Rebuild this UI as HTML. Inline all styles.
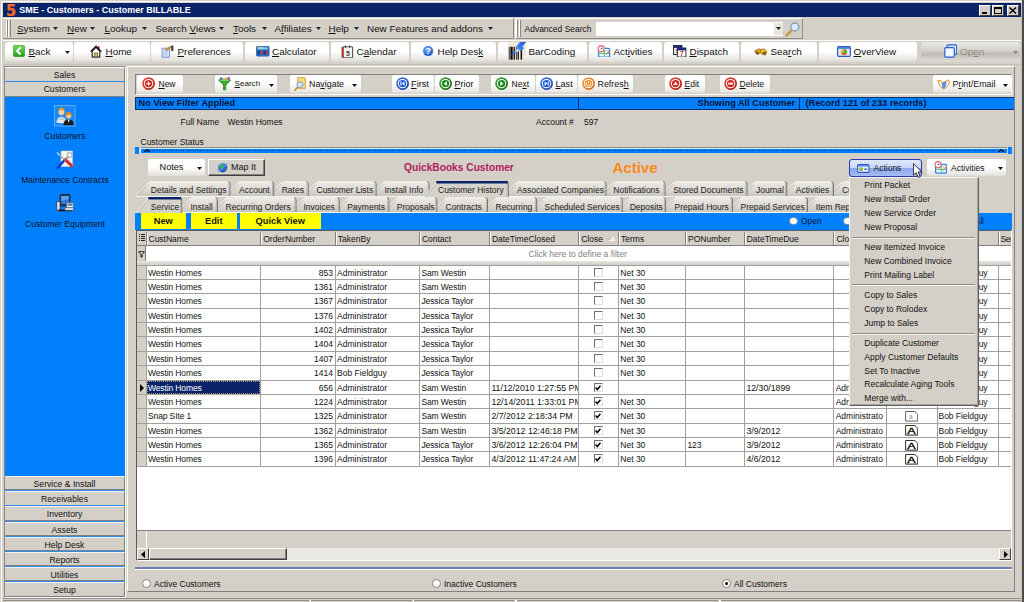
<!DOCTYPE html>
<html><head><meta charset="utf-8"><title>SME - Customers</title>
<style>
*{box-sizing:border-box;margin:0;padding:0}
html,body{width:1024px;height:602px;overflow:hidden;background:#d4d0c8}
body{position:relative;font-family:"Liberation Sans",sans-serif;font-size:8.5px;color:#000;line-height:1}
.a{position:absolute;white-space:nowrap}
.t{position:absolute;white-space:nowrap;font-size:8.5px;line-height:10px;color:#111}
.m{position:absolute;white-space:nowrap;font-size:9.9px;line-height:12px;color:#111}
.b{font-weight:bold}
u{text-decoration:underline;text-underline-offset:1px}
.tb{position:absolute;top:42px;height:20px;border-radius:3px;background:linear-gradient(#ffffff 0%,#fefefe 50%,#e9e7e3 85%,#dcdad4 100%)}
.nb{position:absolute;top:75.2px;height:18px;border-radius:2px;background:linear-gradient(#ffffff 0%,#fdfdfd 50%,#e9e7e3 90%,#dedcd6 100%)}
.sb{position:absolute;left:5px;width:120px;height:14px;background:#d4d0c8;text-align:center;font-size:8.65px;line-height:14px;color:#111;border-right:1px solid #808080}
.bl{position:absolute;left:5px;width:120px;height:1px;background:#2a8cf0}
.tab{position:absolute;height:16px}
.gl{position:absolute;background:#a0a0a0}
.hl{position:absolute;background:#808080}
</style></head><body>
<div class="a" style="left:1px;top:1px;width:1021px;height:601px;border-left:1.2px solid #fff;border-top:1.2px solid #fff"></div>
<div class="a" style="left:1022.3px;top:0;width:1.7px;height:602px;background:#4a4a4a"></div>
<div class="a" style="left:1021.3px;top:2px;width:1px;height:600px;background:#c4c1b9"></div>
<div class="a" style="left:3px;top:3px;width:1017.8px;height:14.3px;background:#0a246a"></div>
<div class="a b" style="left:6px;top:1.8px;font-size:16.6px;line-height:17px;color:#f26a28;font-family:'DejaVu Sans','Liberation Sans',sans-serif;transform:scaleX(0.86);transform-origin:0 0;text-shadow:0.4px 0 0 #f26a28">5</div>
<div class="a b" style="left:19.3px;top:4.2px;font-size:9px;line-height:12px;color:#fff">SME - Customers - Customer BILLABLE</div>
<div class="a" style="left:979px;top:5px;width:12px;height:11px;background:#d4d0c8;border:1px solid #fff;border-right-color:#404040;border-bottom-color:#404040"></div>
<div class="a" style="left:992px;top:5px;width:12px;height:11px;background:#d4d0c8;border:1px solid #fff;border-right-color:#404040;border-bottom-color:#404040"></div>
<div class="a" style="left:1007px;top:5px;width:12px;height:11px;background:#d4d0c8;border:1px solid #fff;border-right-color:#404040;border-bottom-color:#404040"></div>
<div class="a" style="left:982px;top:12px;width:5px;height:2px;background:#000"></div>
<div class="a" style="left:994px;top:7px;width:8px;height:7px;border:1px solid #000;border-top-width:2px"></div>
<svg class="a" style="left:1009px;top:7px" width="8" height="7"><path d="M0.5 0.5L7 6.5M7 0.5L0.5 6.5" stroke="#000" stroke-width="1.4"/></svg>
<div class="a" style="left:3px;top:18.2px;width:511px;height:20.6px;border-bottom:1px solid #8e8c86;border-right:1px solid #8e8c86;border-top:1px solid #fff"></div>
<div class="a" style="left:6px;top:20.3px;width:2.2px;height:17.2px;border-left:1px solid #fff;border-right:1px solid #8a8882"></div>
<div class="a" style="left:8.4px;top:20.3px;width:2.2px;height:17.2px;border-left:1px solid #fff;border-right:1px solid #8a8882"></div>
<div class="m" style="left:17px;top:22.5px"><u>S</u>ystem</div>
<svg class="a" style="left:53px;top:27px" width="5" height="3"><path d="M0 0H5L2.5 3Z" fill="#222"/></svg>
<div class="m" style="left:67px;top:22.5px"><u>N</u>ew</div>
<svg class="a" style="left:90px;top:27px" width="5" height="3"><path d="M0 0H5L2.5 3Z" fill="#222"/></svg>
<div class="m" style="left:104.5px;top:22.5px"><u>L</u>ookup</div>
<svg class="a" style="left:141.5px;top:27px" width="5" height="3"><path d="M0 0H5L2.5 3Z" fill="#222"/></svg>
<div class="m" style="left:155.5px;top:22.5px">Search <u>V</u>iews</div>
<svg class="a" style="left:219px;top:27px" width="5" height="3"><path d="M0 0H5L2.5 3Z" fill="#222"/></svg>
<div class="m" style="left:233px;top:22.5px"><u>T</u>ools</div>
<svg class="a" style="left:262px;top:27px" width="5" height="3"><path d="M0 0H5L2.5 3Z" fill="#222"/></svg>
<div class="m" style="left:274.5px;top:22.5px">A<u>f</u>filiates</div>
<svg class="a" style="left:316px;top:27px" width="5" height="3"><path d="M0 0H5L2.5 3Z" fill="#222"/></svg>
<div class="m" style="left:328.5px;top:22.5px"><u>H</u>elp</div>
<svg class="a" style="left:354px;top:27px" width="5" height="3"><path d="M0 0H5L2.5 3Z" fill="#222"/></svg>
<div class="m" style="left:367px;top:22.5px">New Features and addons</div>
<svg class="a" style="left:488px;top:27px" width="5" height="3"><path d="M0 0H5L2.5 3Z" fill="#222"/></svg>
<div class="a" style="left:514.5px;top:18.2px;width:288.5px;height:20.6px;border-bottom:1px solid #8e8c86;border-right:1px solid #8e8c86;border-top:1px solid #fff;border-left:1px solid #fff"></div>
<div class="a" style="left:516.2px;top:20.3px;width:2.2px;height:17.2px;border-left:1px solid #fff;border-right:1px solid #8a8882"></div>
<div class="a" style="left:518.6px;top:20.3px;width:2.2px;height:17.2px;border-left:1px solid #fff;border-right:1px solid #8a8882"></div>
<div class="t" style="left:524.5px;top:24px">Advanced Search</div>
<div class="a" style="left:596px;top:22px;width:187px;height:13.5px;background:#fff"></div>
<div class="a" style="left:774px;top:23px;width:9px;height:12px;background:#e8e6e0"></div>
<svg class="a" style="left:776px;top:27px" width="5" height="3"><path d="M0 0H5L2.5 3Z" fill="#222"/></svg>
<svg class="a" style="left:785px;top:21px" width="16" height="16" viewBox="0 0 16 16"><path d="M1.5 14.5L7 9" stroke="#c8962c" stroke-width="2.4" stroke-linecap="round"/><circle cx="9.8" cy="6" r="4" fill="#d8ecfb" stroke="#7f9fc0" stroke-width="1.3"/></svg>
<div class="a" style="left:3px;top:39.6px;width:1018px;height:1px;background:#fbfbfa"></div>
<div class="a" style="left:3px;top:63.8px;width:1018px;height:1.5px;background:#c3c0b8"></div>
<div class="tb" style="left:4.5px;width:68.0px"></div>
<div class="tb" style="left:74px;width:75.5px"></div>
<div class="tb" style="left:151px;width:92px"></div>
<div class="tb" style="left:245px;width:84px"></div>
<div class="tb" style="left:330.5px;width:78.0px"></div>
<div class="tb" style="left:410.5px;width:85.5px"></div>
<div class="tb" style="left:498px;width:89px"></div>
<div class="tb" style="left:589px;width:73px"></div>
<div class="tb" style="left:664px;width:75px"></div>
<div class="tb" style="left:741px;width:75.5px"></div>
<div class="tb" style="left:818.5px;width:98.0px"></div>
<div class="a" style="left:921px;top:42px;width:99px;height:20px;border-radius:3px;background:linear-gradient(#e9e8e4 0%,#d6d4ce 40%,#bebbb3 62%,#d2d0ca 80%,#dddbd6 100%)"></div>
<svg class="a" style="left:13.3px;top:45.3px" width="12" height="12" viewBox="0 0 12 12"><defs><linearGradient id="gb" x1="0" y1="0" x2="0" y2="1"><stop offset="0" stop-color="#7ddc5a"/><stop offset="1" stop-color="#1f9a1a"/></linearGradient></defs><rect x="0.3" y="0.3" width="11.4" height="11.4" rx="1.8" fill="url(#gb)" stroke="#2f9a25" stroke-width="0.6"/><path d="M7.6 2.6L4 6L7.6 9.4" stroke="#fff" stroke-width="2" fill="none"/></svg>
<svg class="a" style="left:90px;top:44.5px" width="12" height="13" viewBox="0 0 12 13"><path d="M8.6 1.2V4" stroke="#c02010" stroke-width="1.6"/><path d="M0.6 6.6L6 1.2L11.4 6.6" stroke="#111" stroke-width="1.3" fill="none"/><path d="M2.2 6V12H9.8V6L6 2.4Z" fill="#fff" stroke="#111" stroke-width="1.1"/><rect x="4.8" y="8" width="2.6" height="4" fill="#f5d020" stroke="#111" stroke-width="0.6"/></svg>
<svg class="a" style="left:161px;top:44.5px" width="13" height="13" viewBox="0 0 13 13"><rect x="1" y="3.2" width="7.6" height="9" fill="#cfe1fb" stroke="#6d8fd0" stroke-width="0.9"/><path d="M2.5 6H7M2.5 8H7M2.5 10H6" stroke="#9db8ea" stroke-width="0.7"/><path d="M4.5 5.2L10.5 1.8" stroke="#c88a3a" stroke-width="2.2"/><rect x="10.3" y="0.5" width="2" height="5.5" fill="#333"/></svg>
<svg class="a" style="left:256px;top:46px" width="13.5" height="10.5" viewBox="0 0 13.5 10.5"><rect x="0.4" y="0.4" width="12.7" height="9.7" rx="1" fill="#2a78d8" stroke="#1a58b0" stroke-width="0.8"/><rect x="1.6" y="1.4" width="10.3" height="2" fill="#7fd0ff"/><rect x="1.6" y="1.4" width="6" height="0.9" fill="#ffe070"/><rect x="1.8" y="4.6" width="2" height="4" fill="#18306a"/><rect x="4.6" y="4.6" width="2" height="4" fill="#c03030"/><rect x="7.4" y="4.6" width="2" height="4" fill="#18306a"/><rect x="10" y="4.6" width="1.8" height="4" fill="#c03030"/></svg>
<svg class="a" style="left:341.3px;top:44.5px" width="12.5" height="13.5" viewBox="0 0 12.5 13.5"><rect x="1.8" y="1.8" width="9.8" height="11" rx="1" fill="#f4f4f4" stroke="#555" stroke-width="1.1"/><rect x="0.6" y="2.2" width="2" height="10.4" fill="#b02a20"/><path d="M4.5 0.4V3M8.8 0.4V3" stroke="#444" stroke-width="1.1"/><text x="7" y="10.8" font-family="Liberation Sans,sans-serif" font-size="7" font-weight="bold" text-anchor="middle" fill="#444">5</text></svg>
<svg class="a" style="left:422.3px;top:45.2px" width="12.2" height="12.2" viewBox="0 0 12.2 12.2"><defs><radialGradient id="hg" cx="0.4" cy="0.3" r="0.8"><stop offset="0" stop-color="#6fa8ff"/><stop offset="1" stop-color="#164fc0"/></radialGradient></defs><circle cx="6.1" cy="6.1" r="5.8" fill="#dfe9fb"/><circle cx="6.1" cy="6.1" r="5" fill="url(#hg)"/><text x="6.1" y="9.5" font-family="Liberation Sans,sans-serif" font-size="9.5" font-weight="bold" text-anchor="middle" fill="#fff">?</text></svg>
<svg class="a" style="left:508.1px;top:42.2px" width="18.2" height="17.7" viewBox="0 0 18.2 17.7"><defs><linearGradient id="lg" x1="1" y1="0" x2="0" y2="1"><stop offset="0" stop-color="#1a50d8"/><stop offset="0.42" stop-color="#3f86f4"/><stop offset="0.55" stop-color="#e4efff"/><stop offset="0.7" stop-color="#2a68e4"/><stop offset="1" stop-color="#0c32b0"/></linearGradient></defs><rect x="0" y="0" width="18.2" height="17.7" fill="#f0ebdc"/><rect x="0.7" y="4.8" width="1.2" height="12.9" fill="#55534c"/><rect x="2.4" y="4.8" width="2.3" height="12.9" fill="#0a0a0a"/><rect x="5.6" y="4.8" width="1.3" height="12.9" fill="#111"/><rect x="7.9" y="4.8" width="0.9" height="12.9" fill="#222"/><rect x="9.6" y="4.8" width="1.3" height="12.9" fill="#111"/><rect x="12.6" y="4.8" width="1.5" height="12.9" fill="#0a0a0a"/><path d="M12 0L18 0L14.4 4.8L16.4 6.2L1 14.8L9.6 6.6L7.8 5Z" fill="url(#lg)"/></svg>
<svg class="a" style="left:597px;top:44.6px" width="13.5" height="12.8" viewBox="0 0 13.5 12.8"><rect x="1.6" y="3.4" width="11" height="8.8" rx="1.2" fill="#eef6ff" stroke="#3486e8" stroke-width="1.3"/><path d="M7.4 4.4V11.6M2.4 8.4H12" stroke="#5cc45c" stroke-width="1"/><path d="M2.4 6H12" stroke="#9cc8f4" stroke-width="0.8"/><circle cx="4.1" cy="3.7" r="3.1" fill="#e6f0fa" stroke="#f05c5c" stroke-width="1.1"/><rect x="4" y="2.8" width="1.2" height="1.2" fill="#445"/><circle cx="12.2" cy="6.4" r="1.1" fill="#f07828"/><path d="M9.4 9.6L11.8 6.8" stroke="#8878c8" stroke-width="1"/></svg>
<svg class="a" style="left:673.3px;top:44.6px" width="13.5" height="12.5" viewBox="0 0 13.5 12.5"><rect x="0.5" y="0.5" width="8.5" height="9" fill="#e8e8f0" stroke="#222" stroke-width="0.9"/><rect x="0.5" y="0.5" width="8.5" height="2.4" fill="#182a78"/><text x="3" y="8" font-family="Liberation Sans,sans-serif" font-size="6" font-weight="bold" fill="#c02020">5</text><rect x="4.3" y="3" width="8.6" height="9" fill="#fff" stroke="#222" stroke-width="0.9"/><rect x="4.3" y="3" width="8.6" height="2.4" fill="#182a78"/><text x="8.7" y="11.2" font-family="Liberation Sans,sans-serif" font-size="6.5" font-weight="bold" text-anchor="middle" fill="#d02020">7</text></svg>
<svg class="a" style="left:754.3px;top:47.5px" width="13.5" height="8" viewBox="0 0 13.5 8"><path d="M0.5 3L5 0.8L8 2.2L6 5.5L3 6.5Z" fill="#e8b020" stroke="#8a5a08" stroke-width="0.7"/><path d="M6 2L10 0.8L13 3.5L11.5 7L8 6.5Z" fill="#f0c030" stroke="#8a5a08" stroke-width="0.7"/><circle cx="3.2" cy="4.8" r="1.4" fill="#7a4a08"/><circle cx="10.4" cy="5" r="1.5" fill="#7a4a08"/></svg>
<svg class="a" style="left:837px;top:46.2px" width="14" height="11" viewBox="0 0 14 11"><rect x="0.6" y="0.6" width="12.8" height="9.8" rx="1.2" fill="#dfe9fb" stroke="#2a58c8" stroke-width="1.2"/><rect x="1.2" y="1.2" width="11.6" height="1.6" fill="#3a70e0"/><circle cx="7" cy="6.3" r="3" fill="#e06020"/><path d="M7 6.3L7 3.3A3 3 0 0 1 9.8 7.4Z" fill="#40b040"/><path d="M7 6.3L4.2 7.4A3 3 0 0 1 7 3.3Z" fill="#e0c020"/></svg>
<svg class="a" style="left:943.7px;top:44px" width="13.5" height="14" viewBox="0 0 13.5 14"><rect x="3.2" y="0.8" width="9.5" height="9.5" rx="1.2" fill="#dbe7fb" stroke="#2a5fd0" stroke-width="1.2"/><rect x="0.8" y="3.6" width="9.5" height="9.6" rx="1.2" fill="#f2f6fe" stroke="#2a5fd0" stroke-width="1.2"/></svg>
<div class="m" style="left:28.5px;top:46px"><u>B</u>ack</div>
<div class="m" style="left:105.5px;top:46px"><u>H</u>ome</div>
<div class="m" style="left:177.5px;top:46px"><u>P</u>references</div>
<div class="m" style="left:272px;top:46px"><u>C</u>alculator</div>
<div class="m" style="left:356.5px;top:46px">C<u>a</u>lendar</div>
<div class="m" style="left:437.5px;top:46px">Help Des<u>k</u></div>
<div class="m" style="left:528.5px;top:46px">BarCodin<u>g</u></div>
<div class="m" style="left:613.5px;top:46px">Act<u>i</u>vities</div>
<div class="m" style="left:689.5px;top:46px"><u>D</u>ispatch</div>
<div class="m" style="left:770.5px;top:46px">Sea<u>r</u>ch</div>
<div class="m" style="left:853.5px;top:46px"><u>O</u>verView</div>
<div class="m" style="left:960px;top:46px;color:#8a8880">Op<u>e</u>n</div>
<svg class="a" style="left:65px;top:51px" width="5" height="3"><path d="M0 0H5L2.5 3Z" fill="#222"/></svg>
<svg class="a" style="left:1013px;top:51px" width="5" height="3"><path d="M0 0H5L2.5 3Z" fill="#8a8880"/></svg>
<div class="a" style="left:4px;top:66px;width:122px;height:532px;border-top:1px solid #8c8a84;border-left:1px solid #8c8a84;border-right:1px solid #fff;border-bottom:1px solid #fff"></div>
<div class="a" style="left:5px;top:97px;width:120px;height:379px;background:#0080ff"></div>
<div class="sb" style="top:67px;border-top:1px solid #fff">Sales</div>
<div class="bl" style="top:81px"></div>
<div class="sb" style="top:82px;height:15px;line-height:15px;border-bottom:1px solid #808080">Customers</div>
<div class="sb" style="top:476.00px;height:14.4px;line-height:14.6px;border-top:1px solid #f4f3f0;border-bottom:1px solid #808080">Service &amp; Install</div>
<div class="bl" style="top:490.30px;height:1.2px"></div>
<div class="sb" style="top:491.17px;height:14.4px;line-height:14.6px;border-top:1px solid #f4f3f0;border-bottom:1px solid #808080">Receivables</div>
<div class="bl" style="top:505.47px;height:1.2px"></div>
<div class="sb" style="top:506.34px;height:14.4px;line-height:14.6px;border-top:1px solid #f4f3f0;border-bottom:1px solid #808080">Inventory</div>
<div class="bl" style="top:520.64px;height:1.2px"></div>
<div class="sb" style="top:521.51px;height:14.4px;line-height:14.6px;border-top:1px solid #f4f3f0;border-bottom:1px solid #808080">Assets</div>
<div class="bl" style="top:535.81px;height:1.2px"></div>
<div class="sb" style="top:536.68px;height:14.4px;line-height:14.6px;border-top:1px solid #f4f3f0;border-bottom:1px solid #808080">Help Desk</div>
<div class="bl" style="top:550.98px;height:1.2px"></div>
<div class="sb" style="top:551.85px;height:14.4px;line-height:14.6px;border-top:1px solid #f4f3f0;border-bottom:1px solid #808080">Reports</div>
<div class="bl" style="top:566.15px;height:1.2px"></div>
<div class="sb" style="top:567.02px;height:14.4px;line-height:14.6px;border-top:1px solid #f4f3f0;border-bottom:1px solid #808080">Utilities</div>
<div class="bl" style="top:581.32px;height:1.2px"></div>
<div class="sb" style="top:582.19px;height:14.4px;line-height:14.6px;border-top:1px solid #f4f3f0;border-bottom:1px solid #808080">Setup</div>
<div class="t" style="left:5px;width:120px;text-align:center;top:130.5px;color:#0a1020">Customers</div>
<div class="t" style="left:5px;width:120px;text-align:center;top:174.5px;color:#0a1020">Maintenance Contracts</div>
<div class="t" style="left:5px;width:120px;text-align:center;top:218.5px;color:#0a1020">Customer Equipment</div>
<svg class="a" style="left:54px;top:105px" width="21.5" height="21.5" viewBox="0 0 21.5 21.5"><rect x="0.5" y="0.5" width="20.5" height="20.5" fill="#1a86f8" stroke="#5cb0ff" stroke-width="1"/><path d="M2.5 17.5Q2.5 11.5 7.5 11.5Q12 11.5 12.5 17.5Z" fill="#c8ccd4"/><ellipse cx="7.6" cy="16.6" rx="5.2" ry="1.6" fill="#e8eaf0"/><circle cx="7.4" cy="7.2" r="3" fill="#f4cfa0"/><path d="M4.2 6.4Q4.6 2.4 7.6 2.6Q10.6 2.8 10.6 6Q8.6 4.6 6.4 5.2Q5 5.6 4.2 6.4Z" fill="#d89a20"/><path d="M9.5 20.2Q9.5 14.2 14.6 14.2Q19.5 14.2 19.8 20.2Z" fill="#1a1a1a"/><path d="M13.6 14.6L14.7 18L15.8 14.6Z" fill="#f4f4f4"/><circle cx="14.6" cy="10.8" r="2.7" fill="#f0c898"/><path d="M11.4 12.6Q10.8 7 14.6 7Q18.4 7 17.8 12.6Q17 9.6 14.6 9.4Q12.2 9.6 11.4 12.6Z" fill="#d89018"/></svg>
<svg class="a" style="left:56px;top:150px" width="19" height="19.5" viewBox="0 0 19 19.5"><path d="M5 1H16.5V16.5H5Z" fill="#f6f6f6" stroke="#c8c8c8" stroke-width="0.6"/><circle cx="13.6" cy="5" r="2.4" fill="none" stroke="#b0b0b0" stroke-width="1.1"/><path d="M1 2.4L3.4 5" stroke="#e8e8e8" stroke-width="1.2"/><path d="M3.2 4.8L12 13" stroke="#9aa0a8" stroke-width="1.2"/><path d="M8.4 8.6L16.8 16.6" stroke="#d02828" stroke-width="3.2"/><path d="M9.6 8L17.6 15.6" stroke="#f0a0a0" stroke-width="0.8"/><path d="M12.4 6.4L7 12" stroke="#888" stroke-width="1.3"/><path d="M7.4 11.4L1.6 18" stroke="#1a3cc0" stroke-width="2.6" stroke-linecap="round"/></svg>
<svg class="a" style="left:56.2px;top:194.3px" width="18" height="17.5" viewBox="0 0 18 17.5"><rect x="4" y="0.6" width="10" height="11.4" rx="1" fill="#2a3a50" stroke="#1a2430" stroke-width="0.8"/><rect x="5.2" y="2" width="7.6" height="8" fill="#2a78e0"/><path d="M5.2 2H12.8V5L5.2 7Z" fill="#5aa0f0"/><rect x="0.8" y="7.6" width="3.2" height="8.6" fill="#e0e4ea" stroke="#30343a" stroke-width="0.7"/><rect x="10.6" y="8.4" width="7" height="5.4" fill="#eef2f8" stroke="#50545a" stroke-width="0.7"/><rect x="11.6" y="9.4" width="5" height="2.4" fill="#3a80e0"/><path d="M2.4 16.4H16.4" stroke="#1a1a1a" stroke-width="1.8"/><rect x="9" y="13.8" width="8.4" height="2.4" fill="#d8dce4" stroke="#50545a" stroke-width="0.5"/></svg>
<div class="a" style="left:127px;top:66px;width:888px;height:526px;border-top:1px solid #fff;border-left:1px solid #fff;border-right:1px solid #808080;border-bottom:1px solid #808080"></div>
<div class="a" style="left:135px;top:74px;width:877px;height:21px;border-top:1px solid #808080;border-left:1px solid #808080;border-right:1px solid #fff;border-bottom:1px solid #fff"></div>
<div class="nb" style="left:137px;width:45.5px"></div>
<div class="nb" style="left:215px;width:62px"></div>
<div class="nb" style="left:290px;width:70.5px"></div>
<div class="nb" style="left:391.5px;width:42.5px"></div>
<div class="nb" style="left:435px;width:43.5px"></div>
<div class="nb" style="left:490.5px;width:44.5px"></div>
<div class="nb" style="left:536px;width:41px"></div>
<div class="nb" style="left:578px;width:55px"></div>
<div class="nb" style="left:664.5px;width:40.5px"></div>
<div class="nb" style="left:719.5px;width:50.5px"></div>
<div class="nb" style="left:933px;width:78px"></div>
<svg class="a" style="left:141.8px;top:76.9px" width="13.2" height="13.2" viewBox="0 0 13.2 13.2"><defs><linearGradient id="rg1" x1="0" y1="0" x2="1" y2="1"><stop offset="0" stop-color="#f0503c"/><stop offset="1" stop-color="#9c1010"/></linearGradient></defs><circle cx="6.6" cy="6.6" r="6.4" fill="url(#rg1)"/><circle cx="6.6" cy="6.6" r="4.7" fill="#fff"/><circle cx="6.6" cy="6.6" r="3.7" fill="#d42820"/><path d="M6.6 4.6V8.6M4.6 6.6H8.6" stroke="#fff" stroke-width="1.2"/></svg>
<svg class="a" style="left:218px;top:77px" width="13.5" height="13.5" viewBox="0 0 13.5 13.5"><path d="M0.8 3.2H12.4L7.8 8V12.4L5.6 13V8Z" fill="#38b030" stroke="#1a7a18" stroke-width="0.8"/><ellipse cx="6.6" cy="3.2" rx="5.8" ry="1.5" fill="#7ad86a" stroke="#1a7a18" stroke-width="0.6"/><circle cx="3" cy="1.4" r="1.2" fill="#3070e0"/><circle cx="6.6" cy="2" r="1.2" fill="#f0c020"/><circle cx="10.6" cy="1.2" r="1.3" fill="#d040c0"/></svg>
<svg class="a" style="left:294px;top:77px" width="12" height="14" viewBox="0 0 12 14"><path d="M3.6 0.6H10.4Q11.4 0.6 11.4 1.6V11.4H3.6Z" fill="#f8d880" stroke="#d8a030" stroke-width="0.9"/><circle cx="5.8" cy="7.8" r="2.9" fill="#d8ecff" stroke="#6aa0e0" stroke-width="1"/><path d="M3.8 10L0.8 13.2" stroke="#c88a2a" stroke-width="1.6" stroke-linecap="round"/></svg>
<svg class="a" style="left:395.8px;top:76.9px" width="13.2" height="13.2" viewBox="0 0 13.2 13.2"><defs><linearGradient id="rg2" x1="0" y1="0" x2="1" y2="1"><stop offset="0" stop-color="#4a8af0"/><stop offset="1" stop-color="#0c2c98"/></linearGradient></defs><circle cx="6.6" cy="6.6" r="6.4" fill="url(#rg2)"/><circle cx="6.6" cy="6.6" r="4.7" fill="#fff"/><circle cx="6.6" cy="6.6" r="3.7" fill="#1c58d8"/><path d="M4.9 4.6V8.6" stroke="#fff" stroke-width="1.1"/><path d="M8.6 4.4L5.8 6.6L8.6 8.8Z" fill="#fff"/></svg>
<svg class="a" style="left:438.5px;top:76.9px" width="13.2" height="13.2" viewBox="0 0 13.2 13.2"><defs><linearGradient id="rg3" x1="0" y1="0" x2="1" y2="1"><stop offset="0" stop-color="#48b040"/><stop offset="1" stop-color="#0c5c0c"/></linearGradient></defs><circle cx="6.6" cy="6.6" r="6.4" fill="url(#rg3)"/><circle cx="6.6" cy="6.6" r="4.7" fill="#fff"/><circle cx="6.6" cy="6.6" r="3.7" fill="#1c8a1c"/><path d="M7.9 4.2L4.7 6.6L7.9 9Z" fill="#fff"/></svg>
<svg class="a" style="left:494.6px;top:76.9px" width="13.2" height="13.2" viewBox="0 0 13.2 13.2"><defs><linearGradient id="rg4" x1="0" y1="0" x2="1" y2="1"><stop offset="0" stop-color="#48b040"/><stop offset="1" stop-color="#0c5c0c"/></linearGradient></defs><circle cx="6.6" cy="6.6" r="6.4" fill="url(#rg4)"/><circle cx="6.6" cy="6.6" r="4.7" fill="#fff"/><circle cx="6.6" cy="6.6" r="3.7" fill="#1c8a1c"/><path d="M5.3 4.2L8.5 6.6L5.3 9Z" fill="#fff"/></svg>
<svg class="a" style="left:540px;top:76.9px" width="13.2" height="13.2" viewBox="0 0 13.2 13.2"><defs><linearGradient id="rg5" x1="0" y1="0" x2="1" y2="1"><stop offset="0" stop-color="#4a8af0"/><stop offset="1" stop-color="#0c2c98"/></linearGradient></defs><circle cx="6.6" cy="6.6" r="6.4" fill="url(#rg5)"/><circle cx="6.6" cy="6.6" r="4.7" fill="#fff"/><circle cx="6.6" cy="6.6" r="3.7" fill="#1c58d8"/><path d="M8.3 4.6V8.6" stroke="#fff" stroke-width="1.1"/><path d="M4.6 4.4L7.4 6.6L4.6 8.8Z" fill="#fff"/></svg>
<svg class="a" style="left:582px;top:76.9px" width="13.2" height="13.2" viewBox="0 0 13.2 13.2"><defs><linearGradient id="rg6" x1="0" y1="0" x2="1" y2="1"><stop offset="0" stop-color="#f8a848"/><stop offset="1" stop-color="#c85808"/></linearGradient></defs><circle cx="6.6" cy="6.6" r="6.4" fill="url(#rg6)"/><circle cx="6.6" cy="6.6" r="4.7" fill="#fff"/><circle cx="6.6" cy="6.6" r="3.7" fill="#f08820"/><path d="M5 5.4A2.2 2.2 0 1 0 8.2 5.4" stroke="#fff" stroke-width="0.9" fill="none"/><path d="M6.6 4V6.6" stroke="#fff" stroke-width="0.9"/></svg>
<svg class="a" style="left:668.6px;top:77px" width="13.2" height="13.2" viewBox="0 0 13.2 13.2"><defs><linearGradient id="rg7" x1="0" y1="0" x2="1" y2="1"><stop offset="0" stop-color="#f0503c"/><stop offset="1" stop-color="#9c1010"/></linearGradient></defs><circle cx="6.6" cy="6.6" r="6.4" fill="url(#rg7)"/><circle cx="6.6" cy="6.6" r="4.7" fill="#fff"/><circle cx="6.6" cy="6.6" r="3.7" fill="#d42820"/><path d="M6.6 4.4L8.9 7.9H4.3Z" fill="#fff"/></svg>
<svg class="a" style="left:723.5px;top:77px" width="13.2" height="13.2" viewBox="0 0 13.2 13.2"><defs><linearGradient id="rg8" x1="0" y1="0" x2="1" y2="1"><stop offset="0" stop-color="#f0503c"/><stop offset="1" stop-color="#9c1010"/></linearGradient></defs><circle cx="6.6" cy="6.6" r="6.4" fill="url(#rg8)"/><circle cx="6.6" cy="6.6" r="4.7" fill="#fff"/><circle cx="6.6" cy="6.6" r="3.7" fill="#d42820"/><path d="M4.2 6.6H9" stroke="#fff" stroke-width="1.8"/></svg>
<svg class="a" style="left:936.5px;top:78.5px" width="13.5" height="11" viewBox="0 0 13.5 11"><path d="M0.8 1.2Q1.5 7 6 10.2Q11 8.5 12.8 2.4L10 0.8L7 4L3.4 1.6Z" fill="#fdf2e2" stroke="#e88a28" stroke-width="1"/><path d="M5.2 4.4L9 2.6L8.2 8L5.8 8.8Z" fill="#5a9af0" stroke="#2a60c8" stroke-width="0.6"/></svg>
<div class="t" style="left:158.5px;top:79px;font-size:8.5px"><u>N</u>ew</div>
<div class="t" style="left:234.5px;top:79px;font-size:8.1px"><u>S</u>earch</div>
<div class="t" style="left:309px;top:79px;font-size:8.9px">Na<u>v</u>igate</div>
<div class="t" style="left:411px;top:79px;font-size:9.2px"><u>F</u>irst</div>
<div class="t" style="left:454.5px;top:79px;font-size:9px"><u>P</u>rior</div>
<div class="t" style="left:511.5px;top:79px;font-size:8.5px">Ne<u>x</u>t</div>
<div class="t" style="left:555.5px;top:79px;font-size:9.1px"><u>L</u>ast</div>
<div class="t" style="left:597.5px;top:79px;font-size:8.9px">Refres<u>h</u></div>
<div class="t" style="left:684.5px;top:79px;font-size:8.5px"><u>E</u>dit</div>
<div class="t" style="left:739.5px;top:79px;font-size:8.5px"><u>D</u>elete</div>
<div class="t" style="left:952.5px;top:79px;font-size:8.9px">P<u>r</u>int/Email</div>
<svg class="a" style="left:268.5px;top:84px" width="5" height="3"><path d="M0 0H5L2.5 3Z" fill="#111"/></svg>
<svg class="a" style="left:352px;top:84px" width="5" height="3"><path d="M0 0H5L2.5 3Z" fill="#111"/></svg>
<svg class="a" style="left:1003px;top:84px" width="5" height="3"><path d="M0 0H5L2.5 3Z" fill="#111"/></svg>
<div class="a" style="left:135px;top:96.5px;width:879px;height:13px;background:#0080ff;border-top:1px solid #10306a;border-left:1px solid #10306a;border-bottom:1px solid #10306a"></div>
<div class="a" style="left:578px;top:97px;width:1px;height:12px;background:#0b2a5c"></div>
<div class="a" style="left:799px;top:97px;width:1px;height:12px;background:#0b2a5c"></div>
<div class="a b" style="left:138.6px;top:98px;font-size:9.2px;line-height:11px;color:#051638">No View Filter Applied</div>
<div class="a b" style="left:697.5px;top:98px;font-size:9.2px;line-height:11px;color:#051638">Showing All Customer</div>
<div class="a b" style="left:805.5px;top:98px;font-size:9.2px;line-height:11px;color:#051638">(Record 121 of 233 records)</div>
<div class="t" style="left:180.5px;top:116.5px">Full Name</div>
<div class="t" style="left:227.5px;top:116.5px">Westin Homes</div>
<div class="t" style="left:536px;top:117px">Account #</div>
<div class="t" style="left:584px;top:117px">597</div>
<div class="t" style="left:140.5px;top:137px">Customer Status</div>
<div class="a" style="left:135px;top:147px;width:4.2px;height:6.6px;background:#0080ff"></div>
<div class="a" style="left:1007.8px;top:147px;width:4.2px;height:6.6px;background:#0080ff"></div>
<div class="a" style="left:140.2px;top:147.3px;width:866.6px;height:5.9px;background:#0080ff;border-top:0.8px solid #8c8c8c;border-left:0.8px solid #e8f2ff"></div>
<div class="a" style="left:141px;top:148.1px;width:865.8px;height:0.7px;background:#cfe6ff"></div>
<div class="a" style="left:152px;top:150px;width:845px;height:1.3px;background:repeating-linear-gradient(90deg,#0b3c96 0,#0b3c96 1px,rgba(0,128,255,0) 1px,rgba(0,128,255,0) 2.4px)"></div>
<svg class="a" style="left:143.6px;top:148.8px" width="6.4" height="3.4" viewBox="0 0 8 4.2"><path d="M0.6 3.8L4 0.8L7.4 3.8" stroke="#000" stroke-width="1.5" fill="none"/></svg>
<svg class="a" style="left:998.4px;top:148.8px" width="6.4" height="3.4" viewBox="0 0 8 4.2"><path d="M0.6 3.8L4 0.8L7.4 3.8" stroke="#000" stroke-width="1.5" fill="none"/></svg>
<div class="a" style="left:147.5px;top:159px;width:57.5px;height:17px;border-radius:2px;background:linear-gradient(#fff 0%,#fdfdfd 50%,#e9e7e3 90%,#dedcd6 100%)"></div>
<div class="t" style="left:159.6px;top:162px;font-size:9.1px">Notes</div>
<svg class="a" style="left:197px;top:166.5px" width="5" height="3"><path d="M0 0H5L2.5 3Z" fill="#111"/></svg>
<div class="a" style="left:208px;top:159px;width:57px;height:16.8px;background:#d4d0c8;border:1px solid #fff;border-right:1.5px solid #404040;border-bottom:1.5px solid #404040;box-shadow:inset -1px -1px 0 #808080"></div>
<div class="t" style="left:231px;top:162.4px;font-size:9px">Map It</div>
<div class="a b" style="left:404px;top:162px;font-size:10.2px;line-height:12px;color:#b0205a">QuickBooks Customer</div>
<div class="a b" style="left:612.5px;top:158.5px;font-size:15px;line-height:17px;color:#ff8a18">Active</div>
<div class="a" style="left:849px;top:159px;width:73px;height:17.5px;border-radius:3px;border:1.2px solid #2a3cb0;background:linear-gradient(#dfe8fc 0%,#c9d7fa 47%,#8ea8ee 53%,#a6bbf2 100%)"></div>
<div class="t" style="left:873.5px;top:162.5px">Actions</div>
<div class="a" style="left:926.5px;top:159px;width:79.5px;height:17px;border-radius:2px;background:linear-gradient(#fff 0%,#fdfdfd 50%,#e9e7e3 90%,#dedcd6 100%)"></div>
<div class="t" style="left:951px;top:162.5px">Activities</div>
<svg class="a" style="left:998px;top:166.5px" width="5" height="3"><path d="M0 0H5L2.5 3Z" fill="#111"/></svg>
<svg class="a" style="left:217px;top:162px" width="11" height="11" viewBox="0 0 11 11"><defs><radialGradient id="gg" cx="0.35" cy="0.3" r="0.8"><stop offset="0" stop-color="#5aa8ff"/><stop offset="1" stop-color="#0a3aa8"/></radialGradient></defs><circle cx="5.6" cy="5.8" r="4.6" fill="url(#gg)"/><path d="M3 3.4Q5 2 6.8 3.2Q7.4 5 5.6 6.2Q4 7.6 3.2 6.2Z" fill="#38b040"/><path d="M7 7L8.8 6.4L8.4 8.6Z" fill="#38b040"/><path d="M0.6 9.6Q5 8.4 10.4 1" stroke="#4a98f0" stroke-width="0.9" fill="none"/></svg>
<svg class="a" style="left:857px;top:163.6px" width="12.5" height="9" viewBox="0 0 12.5 9"><rect x="0.6" y="0.6" width="11.3" height="7.8" rx="1" fill="#f4f8ff" stroke="#2a58c8" stroke-width="1.1"/><rect x="1" y="1" width="10.5" height="1.6" fill="#5a8ae8"/><circle cx="4" cy="5.2" r="1.9" fill="#5aa030"/><circle cx="4" cy="5.2" r="0.9" fill="#f0e020"/><path d="M7.2 5.2H10.2" stroke="#2a58c8" stroke-width="1.3"/></svg>
<svg class="a" style="left:933.8px;top:161.2px" width="13.5" height="12.8" viewBox="0 0 13.5 12.8"><rect x="1.6" y="3.4" width="11" height="8.8" rx="1.2" fill="#eef6ff" stroke="#3486e8" stroke-width="1.3"/><path d="M7.4 4.4V11.6M2.4 8.4H12" stroke="#5cc45c" stroke-width="1"/><path d="M2.4 6H12" stroke="#9cc8f4" stroke-width="0.8"/><circle cx="4.1" cy="3.7" r="3.1" fill="#e6f0fa" stroke="#f05c5c" stroke-width="1.1"/><rect x="4" y="2.8" width="1.2" height="1.2" fill="#445"/><circle cx="12.2" cy="6.4" r="1.1" fill="#f07828"/><path d="M9.4 9.6L11.8 6.8" stroke="#8878c8" stroke-width="1"/></svg>
<svg width="0" height="0" style="position:absolute"><defs><linearGradient id="tg" x1="0" y1="0" x2="0" y2="1"><stop offset="0" stop-color="#eceae5"/><stop offset="0.45" stop-color="#e0ddd6"/><stop offset="1" stop-color="#c9c6be"/></linearGradient></defs></svg>
<div class="a" style="left:136px;top:196.3px;width:713px;height:1px;background:#f4f3f0"></div>
<div class="a" style="left:136px;top:212.3px;width:713px;height:1px;background:#f4f3f0"></div>
<svg class="a" style="left:829.2px;top:181.2px" width="31.8" height="16" viewBox="0 0 31.8 16"><path d="M0 15L11.0 3Q12.3 0.8 15.0 0.8H28.299999999999955Q30.299999999999955 0.8 30.299999999999955 3V15Z" fill="url(#tg)"/><path d="M0 15L11.0 3Q12.3 0.8 15.0 0.8H28.299999999999955" fill="none" stroke="#f6f5f2" stroke-width="1"/><path d="M0.8 15L11.8 3.4" fill="none" stroke="#9c9a94" stroke-width="0.6"/><path d="M28.299999999999955 0.8Q30.299999999999955 0.8 30.299999999999955 3V15" fill="none" stroke="#77756f" stroke-width="1"/><path d="M29.199999999999953 2.5V15" fill="none" stroke="#b4b1a9" stroke-width="0.9"/></svg>
<div class="t" style="left:841.9px;top:185.39999999999998px;color:#1c1c1c">Cu</div>
<svg class="a" style="left:782.2px;top:181.2px" width="53.0" height="16" viewBox="0 0 53.0 16"><path d="M0 15L11.0 3Q12.3 0.8 15.0 0.8H49.5Q51.5 0.8 51.5 3V15Z" fill="url(#tg)"/><path d="M0 15L11.0 3Q12.3 0.8 15.0 0.8H49.5" fill="none" stroke="#f6f5f2" stroke-width="1"/><path d="M0.8 15L11.8 3.4" fill="none" stroke="#9c9a94" stroke-width="0.6"/><path d="M49.5 0.8Q51.5 0.8 51.5 3V15" fill="none" stroke="#77756f" stroke-width="1"/><path d="M50.4 2.5V15" fill="none" stroke="#b4b1a9" stroke-width="0.9"/></svg>
<div class="t" style="left:795.8px;top:185.39999999999998px;color:#1c1c1c">Activities</div>
<svg class="a" style="left:742px;top:181.2px" width="46.2" height="16" viewBox="0 0 46.2 16"><path d="M0 15L11.0 3Q12.3 0.8 15.0 0.8H42.700000000000045Q44.700000000000045 0.8 44.700000000000045 3V15Z" fill="url(#tg)"/><path d="M0 15L11.0 3Q12.3 0.8 15.0 0.8H42.700000000000045" fill="none" stroke="#f6f5f2" stroke-width="1"/><path d="M0.8 15L11.8 3.4" fill="none" stroke="#9c9a94" stroke-width="0.6"/><path d="M42.700000000000045 0.8Q44.700000000000045 0.8 44.700000000000045 3V15" fill="none" stroke="#77756f" stroke-width="1"/><path d="M43.600000000000044 2.5V15" fill="none" stroke="#b4b1a9" stroke-width="0.9"/></svg>
<div class="t" style="left:756px;top:185.39999999999998px;color:#1c1c1c">Journal</div>
<svg class="a" style="left:660.5px;top:181.2px" width="87.5" height="16" viewBox="0 0 87.5 16"><path d="M0 15L11.0 3Q12.3 0.8 15.0 0.8H84.0Q86.0 0.8 86.0 3V15Z" fill="url(#tg)"/><path d="M0 15L11.0 3Q12.3 0.8 15.0 0.8H84.0" fill="none" stroke="#f6f5f2" stroke-width="1"/><path d="M0.8 15L11.8 3.4" fill="none" stroke="#9c9a94" stroke-width="0.6"/><path d="M84.0 0.8Q86.0 0.8 86.0 3V15" fill="none" stroke="#77756f" stroke-width="1"/><path d="M84.9 2.5V15" fill="none" stroke="#b4b1a9" stroke-width="0.9"/></svg>
<div class="t" style="left:673.2px;top:185.39999999999998px;color:#1c1c1c">Stored Documents</div>
<svg class="a" style="left:601px;top:181.2px" width="65.5" height="16" viewBox="0 0 65.5 16"><path d="M0 15L11.0 3Q12.3 0.8 15.0 0.8H62.0Q64.0 0.8 64.0 3V15Z" fill="url(#tg)"/><path d="M0 15L11.0 3Q12.3 0.8 15.0 0.8H62.0" fill="none" stroke="#f6f5f2" stroke-width="1"/><path d="M0.8 15L11.8 3.4" fill="none" stroke="#9c9a94" stroke-width="0.6"/><path d="M62.0 0.8Q64.0 0.8 64.0 3V15" fill="none" stroke="#77756f" stroke-width="1"/><path d="M62.9 2.5V15" fill="none" stroke="#b4b1a9" stroke-width="0.9"/></svg>
<div class="t" style="left:613.3px;top:185.39999999999998px;color:#1c1c1c">Notifications</div>
<svg class="a" style="left:503.5px;top:181.2px" width="103.5" height="16" viewBox="0 0 103.5 16"><path d="M0 15L11.0 3Q12.3 0.8 15.0 0.8H100.0Q102.0 0.8 102.0 3V15Z" fill="url(#tg)"/><path d="M0 15L11.0 3Q12.3 0.8 15.0 0.8H100.0" fill="none" stroke="#f6f5f2" stroke-width="1"/><path d="M0.8 15L11.8 3.4" fill="none" stroke="#9c9a94" stroke-width="0.6"/><path d="M100.0 0.8Q102.0 0.8 102.0 3V15" fill="none" stroke="#77756f" stroke-width="1"/><path d="M100.9 2.5V15" fill="none" stroke="#b4b1a9" stroke-width="0.9"/></svg>
<div class="t" style="left:517px;top:185.39999999999998px;color:#1c1c1c">Associated Companies</div>
<svg class="a" style="left:371.3px;top:181.2px" width="59.7" height="16" viewBox="0 0 59.7 16"><path d="M0 15L11.0 3Q12.3 0.8 15.0 0.8H56.19999999999999Q58.19999999999999 0.8 58.19999999999999 3V15Z" fill="url(#tg)"/><path d="M0 15L11.0 3Q12.3 0.8 15.0 0.8H56.19999999999999" fill="none" stroke="#f6f5f2" stroke-width="1"/><path d="M0.8 15L11.8 3.4" fill="none" stroke="#9c9a94" stroke-width="0.6"/><path d="M56.19999999999999 0.8Q58.19999999999999 0.8 58.19999999999999 3V15" fill="none" stroke="#77756f" stroke-width="1"/><path d="M57.09999999999999 2.5V15" fill="none" stroke="#b4b1a9" stroke-width="0.9"/></svg>
<div class="t" style="left:384.5px;top:185.39999999999998px;color:#1c1c1c">Install Info</div>
<svg class="a" style="left:303.7px;top:181.2px" width="73.6" height="16" viewBox="0 0 73.6 16"><path d="M0 15L11.0 3Q12.3 0.8 15.0 0.8H70.10000000000002Q72.10000000000002 0.8 72.10000000000002 3V15Z" fill="url(#tg)"/><path d="M0 15L11.0 3Q12.3 0.8 15.0 0.8H70.10000000000002" fill="none" stroke="#f6f5f2" stroke-width="1"/><path d="M0.8 15L11.8 3.4" fill="none" stroke="#9c9a94" stroke-width="0.6"/><path d="M70.10000000000002 0.8Q72.10000000000002 0.8 72.10000000000002 3V15" fill="none" stroke="#77756f" stroke-width="1"/><path d="M71.00000000000003 2.5V15" fill="none" stroke="#b4b1a9" stroke-width="0.9"/></svg>
<div class="t" style="left:316.5px;top:185.39999999999998px;color:#1c1c1c">Customer Lists</div>
<svg class="a" style="left:269px;top:181.2px" width="40.7" height="16" viewBox="0 0 40.7 16"><path d="M0 15L11.0 3Q12.3 0.8 15.0 0.8H37.19999999999999Q39.19999999999999 0.8 39.19999999999999 3V15Z" fill="url(#tg)"/><path d="M0 15L11.0 3Q12.3 0.8 15.0 0.8H37.19999999999999" fill="none" stroke="#f6f5f2" stroke-width="1"/><path d="M0.8 15L11.8 3.4" fill="none" stroke="#9c9a94" stroke-width="0.6"/><path d="M37.19999999999999 0.8Q39.19999999999999 0.8 39.19999999999999 3V15" fill="none" stroke="#77756f" stroke-width="1"/><path d="M38.09999999999999 2.5V15" fill="none" stroke="#b4b1a9" stroke-width="0.9"/></svg>
<div class="t" style="left:281.7px;top:185.39999999999998px;color:#1c1c1c">Rates</div>
<svg class="a" style="left:225.8px;top:181.2px" width="49.2" height="16" viewBox="0 0 49.2 16"><path d="M0 15L11.0 3Q12.3 0.8 15.0 0.8H45.69999999999999Q47.69999999999999 0.8 47.69999999999999 3V15Z" fill="url(#tg)"/><path d="M0 15L11.0 3Q12.3 0.8 15.0 0.8H45.69999999999999" fill="none" stroke="#f6f5f2" stroke-width="1"/><path d="M0.8 15L11.8 3.4" fill="none" stroke="#9c9a94" stroke-width="0.6"/><path d="M45.69999999999999 0.8Q47.69999999999999 0.8 47.69999999999999 3V15" fill="none" stroke="#77756f" stroke-width="1"/><path d="M46.59999999999999 2.5V15" fill="none" stroke="#b4b1a9" stroke-width="0.9"/></svg>
<div class="t" style="left:239px;top:185.39999999999998px;color:#1c1c1c">Account</div>
<svg class="a" style="left:136.3px;top:181.2px" width="95.5" height="16" viewBox="0 0 95.5 16"><path d="M0 15L11.0 3Q12.3 0.8 15.0 0.8H92.0Q94.0 0.8 94.0 3V15Z" fill="url(#tg)"/><path d="M0 15L11.0 3Q12.3 0.8 15.0 0.8H92.0" fill="none" stroke="#f6f5f2" stroke-width="1"/><path d="M0.8 15L11.8 3.4" fill="none" stroke="#9c9a94" stroke-width="0.6"/><path d="M92.0 0.8Q94.0 0.8 94.0 3V15" fill="none" stroke="#77756f" stroke-width="1"/><path d="M92.9 2.5V15" fill="none" stroke="#b4b1a9" stroke-width="0.9"/></svg>
<div class="t" style="left:150.8px;top:185.39999999999998px;color:#1c1c1c">Details and Settings</div>
<svg class="a" style="left:423.7px;top:181.2px" width="85.8" height="17" viewBox="0 0 85.8 17"><path d="M0 16L11.0 3Q12.3 0.8 15.0 0.8H82.30000000000001Q84.30000000000001 0.8 84.30000000000001 3V16Z" fill="#d6d3cb"/><path d="M0 16L11.0 3Q12.3 0.8 15.0 0.8H82.30000000000001" fill="none" stroke="#f6f5f2" stroke-width="1"/><path d="M0.8 16L11.8 3.4" fill="none" stroke="#9c9a94" stroke-width="0.6"/><path d="M82.30000000000001 0.8Q84.30000000000001 0.8 84.30000000000001 3V16" fill="none" stroke="#77756f" stroke-width="1"/><path d="M83.20000000000002 2.5V16" fill="none" stroke="#b4b1a9" stroke-width="0.9"/><path d="M12.3 1.3H83.80000000000001" stroke="#0a246a" stroke-width="2.4"/></svg>
<div class="t" style="left:438px;top:185.39999999999998px;color:#1c1c1c">Customer History</div>
<svg class="a" style="left:802.5px;top:197.3px" width="58.5" height="16" viewBox="0 0 58.5 16"><path d="M0 15L11.0 3Q12.3 0.8 15.0 0.8H55.0Q57.0 0.8 57.0 3V15Z" fill="url(#tg)"/><path d="M0 15L11.0 3Q12.3 0.8 15.0 0.8H55.0" fill="none" stroke="#f6f5f2" stroke-width="1"/><path d="M0.8 15L11.8 3.4" fill="none" stroke="#9c9a94" stroke-width="0.6"/><path d="M55.0 0.8Q57.0 0.8 57.0 3V15" fill="none" stroke="#77756f" stroke-width="1"/><path d="M55.9 2.5V15" fill="none" stroke="#b4b1a9" stroke-width="0.9"/></svg>
<div class="t" style="left:815.8px;top:201.5px;color:#1c1c1c">Item Rep</div>
<svg class="a" style="left:727.5px;top:197.3px" width="81.0" height="16" viewBox="0 0 81.0 16"><path d="M0 15L11.0 3Q12.3 0.8 15.0 0.8H77.5Q79.5 0.8 79.5 3V15Z" fill="url(#tg)"/><path d="M0 15L11.0 3Q12.3 0.8 15.0 0.8H77.5" fill="none" stroke="#f6f5f2" stroke-width="1"/><path d="M0.8 15L11.8 3.4" fill="none" stroke="#9c9a94" stroke-width="0.6"/><path d="M77.5 0.8Q79.5 0.8 79.5 3V15" fill="none" stroke="#77756f" stroke-width="1"/><path d="M78.4 2.5V15" fill="none" stroke="#b4b1a9" stroke-width="0.9"/></svg>
<div class="t" style="left:740.6px;top:201.5px;color:#1c1c1c">Prepaid Services</div>
<svg class="a" style="left:661.5px;top:197.3px" width="72.0" height="16" viewBox="0 0 72.0 16"><path d="M0 15L11.0 3Q12.3 0.8 15.0 0.8H68.5Q70.5 0.8 70.5 3V15Z" fill="url(#tg)"/><path d="M0 15L11.0 3Q12.3 0.8 15.0 0.8H68.5" fill="none" stroke="#f6f5f2" stroke-width="1"/><path d="M0.8 15L11.8 3.4" fill="none" stroke="#9c9a94" stroke-width="0.6"/><path d="M68.5 0.8Q70.5 0.8 70.5 3V15" fill="none" stroke="#77756f" stroke-width="1"/><path d="M69.4 2.5V15" fill="none" stroke="#b4b1a9" stroke-width="0.9"/></svg>
<div class="t" style="left:674.5px;top:201.5px;color:#1c1c1c">Prepaid Hours</div>
<svg class="a" style="left:617.4px;top:197.3px" width="50.1" height="16" viewBox="0 0 50.1 16"><path d="M0 15L11.0 3Q12.3 0.8 15.0 0.8H46.60000000000002Q48.60000000000002 0.8 48.60000000000002 3V15Z" fill="url(#tg)"/><path d="M0 15L11.0 3Q12.3 0.8 15.0 0.8H46.60000000000002" fill="none" stroke="#f6f5f2" stroke-width="1"/><path d="M0.8 15L11.8 3.4" fill="none" stroke="#9c9a94" stroke-width="0.6"/><path d="M46.60000000000002 0.8Q48.60000000000002 0.8 48.60000000000002 3V15" fill="none" stroke="#77756f" stroke-width="1"/><path d="M47.50000000000002 2.5V15" fill="none" stroke="#b4b1a9" stroke-width="0.9"/></svg>
<div class="t" style="left:629.7px;top:201.5px;color:#1c1c1c">Deposits</div>
<svg class="a" style="left:531.6px;top:197.3px" width="91.8" height="16" viewBox="0 0 91.8 16"><path d="M0 15L11.0 3Q12.3 0.8 15.0 0.8H88.29999999999995Q90.29999999999995 0.8 90.29999999999995 3V15Z" fill="url(#tg)"/><path d="M0 15L11.0 3Q12.3 0.8 15.0 0.8H88.29999999999995" fill="none" stroke="#f6f5f2" stroke-width="1"/><path d="M0.8 15L11.8 3.4" fill="none" stroke="#9c9a94" stroke-width="0.6"/><path d="M88.29999999999995 0.8Q90.29999999999995 0.8 90.29999999999995 3V15" fill="none" stroke="#77756f" stroke-width="1"/><path d="M89.19999999999996 2.5V15" fill="none" stroke="#b4b1a9" stroke-width="0.9"/></svg>
<div class="t" style="left:544.5px;top:201.5px;color:#1c1c1c">Scheduled Services</div>
<svg class="a" style="left:482.5px;top:197.3px" width="55.1" height="16" viewBox="0 0 55.1 16"><path d="M0 15L11.0 3Q12.3 0.8 15.0 0.8H51.60000000000002Q53.60000000000002 0.8 53.60000000000002 3V15Z" fill="url(#tg)"/><path d="M0 15L11.0 3Q12.3 0.8 15.0 0.8H51.60000000000002" fill="none" stroke="#f6f5f2" stroke-width="1"/><path d="M0.8 15L11.8 3.4" fill="none" stroke="#9c9a94" stroke-width="0.6"/><path d="M51.60000000000002 0.8Q53.60000000000002 0.8 53.60000000000002 3V15" fill="none" stroke="#77756f" stroke-width="1"/><path d="M52.50000000000002 2.5V15" fill="none" stroke="#b4b1a9" stroke-width="0.9"/></svg>
<div class="t" style="left:495.5px;top:201.5px;color:#1c1c1c">Recurring</div>
<svg class="a" style="left:432.5px;top:197.3px" width="56.0" height="16" viewBox="0 0 56.0 16"><path d="M0 15L11.0 3Q12.3 0.8 15.0 0.8H52.5Q54.5 0.8 54.5 3V15Z" fill="url(#tg)"/><path d="M0 15L11.0 3Q12.3 0.8 15.0 0.8H52.5" fill="none" stroke="#f6f5f2" stroke-width="1"/><path d="M0.8 15L11.8 3.4" fill="none" stroke="#9c9a94" stroke-width="0.6"/><path d="M52.5 0.8Q54.5 0.8 54.5 3V15" fill="none" stroke="#77756f" stroke-width="1"/><path d="M53.4 2.5V15" fill="none" stroke="#b4b1a9" stroke-width="0.9"/></svg>
<div class="t" style="left:445.5px;top:201.5px;color:#1c1c1c">Contracts</div>
<svg class="a" style="left:384.2px;top:197.3px" width="54.3" height="16" viewBox="0 0 54.3 16"><path d="M0 15L11.0 3Q12.3 0.8 15.0 0.8H50.80000000000001Q52.80000000000001 0.8 52.80000000000001 3V15Z" fill="url(#tg)"/><path d="M0 15L11.0 3Q12.3 0.8 15.0 0.8H50.80000000000001" fill="none" stroke="#f6f5f2" stroke-width="1"/><path d="M0.8 15L11.8 3.4" fill="none" stroke="#9c9a94" stroke-width="0.6"/><path d="M50.80000000000001 0.8Q52.80000000000001 0.8 52.80000000000001 3V15" fill="none" stroke="#77756f" stroke-width="1"/><path d="M51.70000000000001 2.5V15" fill="none" stroke="#b4b1a9" stroke-width="0.9"/></svg>
<div class="t" style="left:396.8px;top:201.5px;color:#1c1c1c">Proposals</div>
<svg class="a" style="left:334.8px;top:197.3px" width="55.4" height="16" viewBox="0 0 55.4 16"><path d="M0 15L11.0 3Q12.3 0.8 15.0 0.8H51.89999999999998Q53.89999999999998 0.8 53.89999999999998 3V15Z" fill="url(#tg)"/><path d="M0 15L11.0 3Q12.3 0.8 15.0 0.8H51.89999999999998" fill="none" stroke="#f6f5f2" stroke-width="1"/><path d="M0.8 15L11.8 3.4" fill="none" stroke="#9c9a94" stroke-width="0.6"/><path d="M51.89999999999998 0.8Q53.89999999999998 0.8 53.89999999999998 3V15" fill="none" stroke="#77756f" stroke-width="1"/><path d="M52.799999999999976 2.5V15" fill="none" stroke="#b4b1a9" stroke-width="0.9"/></svg>
<div class="t" style="left:347.2px;top:201.5px;color:#1c1c1c">Payments</div>
<svg class="a" style="left:291px;top:197.3px" width="49.8" height="16" viewBox="0 0 49.8 16"><path d="M0 15L11.0 3Q12.3 0.8 15.0 0.8H46.30000000000001Q48.30000000000001 0.8 48.30000000000001 3V15Z" fill="url(#tg)"/><path d="M0 15L11.0 3Q12.3 0.8 15.0 0.8H46.30000000000001" fill="none" stroke="#f6f5f2" stroke-width="1"/><path d="M0.8 15L11.8 3.4" fill="none" stroke="#9c9a94" stroke-width="0.6"/><path d="M46.30000000000001 0.8Q48.30000000000001 0.8 48.30000000000001 3V15" fill="none" stroke="#77756f" stroke-width="1"/><path d="M47.20000000000001 2.5V15" fill="none" stroke="#b4b1a9" stroke-width="0.9"/></svg>
<div class="t" style="left:303.5px;top:201.5px;color:#1c1c1c">Invoices</div>
<svg class="a" style="left:212.5px;top:197.3px" width="84.5" height="16" viewBox="0 0 84.5 16"><path d="M0 15L11.0 3Q12.3 0.8 15.0 0.8H81.0Q83.0 0.8 83.0 3V15Z" fill="url(#tg)"/><path d="M0 15L11.0 3Q12.3 0.8 15.0 0.8H81.0" fill="none" stroke="#f6f5f2" stroke-width="1"/><path d="M0.8 15L11.8 3.4" fill="none" stroke="#9c9a94" stroke-width="0.6"/><path d="M81.0 0.8Q83.0 0.8 83.0 3V15" fill="none" stroke="#77756f" stroke-width="1"/><path d="M81.9 2.5V15" fill="none" stroke="#b4b1a9" stroke-width="0.9"/></svg>
<div class="t" style="left:225.5px;top:201.5px;color:#1c1c1c">Recurring Orders</div>
<svg class="a" style="left:177.5px;top:197.3px" width="41.0" height="16" viewBox="0 0 41.0 16"><path d="M0 15L11.0 3Q12.3 0.8 15.0 0.8H37.5Q39.5 0.8 39.5 3V15Z" fill="url(#tg)"/><path d="M0 15L11.0 3Q12.3 0.8 15.0 0.8H37.5" fill="none" stroke="#f6f5f2" stroke-width="1"/><path d="M0.8 15L11.8 3.4" fill="none" stroke="#9c9a94" stroke-width="0.6"/><path d="M37.5 0.8Q39.5 0.8 39.5 3V15" fill="none" stroke="#77756f" stroke-width="1"/><path d="M38.4 2.5V15" fill="none" stroke="#b4b1a9" stroke-width="0.9"/></svg>
<div class="t" style="left:190.5px;top:201.5px;color:#1c1c1c">Install</div>
<svg class="a" style="left:136.3px;top:197.3px" width="47.2" height="17" viewBox="0 0 47.2 17"><path d="M0 16L11.0 3Q12.3 0.8 15.0 0.8H43.69999999999999Q45.69999999999999 0.8 45.69999999999999 3V16Z" fill="#d6d3cb"/><path d="M0 16L11.0 3Q12.3 0.8 15.0 0.8H43.69999999999999" fill="none" stroke="#f6f5f2" stroke-width="1"/><path d="M0.8 16L11.8 3.4" fill="none" stroke="#9c9a94" stroke-width="0.6"/><path d="M43.69999999999999 0.8Q45.69999999999999 0.8 45.69999999999999 3V16" fill="none" stroke="#77756f" stroke-width="1"/><path d="M44.59999999999999 2.5V16" fill="none" stroke="#b4b1a9" stroke-width="0.9"/><path d="M12.3 1.3H45.19999999999999" stroke="#0a246a" stroke-width="2.4"/></svg>
<div class="t" style="left:150.8px;top:201.5px;color:#1c1c1c">Service</div>
<div class="a" style="left:135px;top:213px;width:877px;height:16.5px;background:#0080ff"></div>
<div class="a b" style="left:141px;top:213px;width:44.5px;height:16px;background:#ffff00;text-align:center;font-size:9.3px;line-height:16px;color:#1a1a00">New</div>
<div class="a b" style="left:191px;top:213px;width:45.5px;height:16px;background:#ffff00;text-align:center;font-size:9.3px;line-height:16px;color:#1a1a00">Edit</div>
<div class="a b" style="left:240px;top:213px;width:80.5px;height:16px;background:#ffff00;text-align:center;font-size:9.3px;line-height:16px;color:#1a1a00">Quick View</div>
<div class="a" style="left:789px;top:216.5px;width:8.5px;height:8.5px;border-radius:50%;background:#fff;border:1px solid #7a8aa0"></div>
<div class="t" style="left:801px;top:216px;color:#06183a">Open</div>
<div class="a" style="left:843px;top:216.5px;width:8.5px;height:8.5px;border-radius:50%;background:#fff;border:1px solid #7a8aa0"></div>
<div class="t" style="left:974.5px;top:216px;color:#06183a">All</div>
<div class="a" style="left:136px;top:230px;width:876px;height:330.5px;background:#fff;border:1px solid #5a5a5a;border-right-color:#fff;border-bottom-color:#fff"></div>
<div class="a" style="left:137px;top:231px;width:874px;height:14.5px;background:#d4d0c8;border-bottom:1px solid #808080"></div>
<div class="a" style="left:145.5px;top:232px;width:1px;height:13px;background:#808080"></div>
<div class="a" style="left:146.5px;top:232px;width:1px;height:13px;background:#fff"></div>
<div class="t" style="left:148.5px;top:233.5px;width:112.19999999999999px;overflow:hidden">CustName</div>
<div class="a" style="left:260.2px;top:232px;width:1px;height:13px;background:#808080"></div>
<div class="a" style="left:261.2px;top:232px;width:1px;height:13px;background:#fff"></div>
<div class="t" style="left:263.2px;top:233.5px;width:72.10000000000002px;overflow:hidden">OrderNumber</div>
<div class="a" style="left:334.8px;top:232px;width:1px;height:13px;background:#808080"></div>
<div class="a" style="left:335.8px;top:232px;width:1px;height:13px;background:#fff"></div>
<div class="t" style="left:337.8px;top:233.5px;width:81.59999999999997px;overflow:hidden">TakenBy</div>
<div class="a" style="left:418.9px;top:232px;width:1px;height:13px;background:#808080"></div>
<div class="a" style="left:419.9px;top:232px;width:1px;height:13px;background:#fff"></div>
<div class="t" style="left:421.9px;top:233.5px;width:67.5px;overflow:hidden">Contact</div>
<div class="a" style="left:488.9px;top:232px;width:1px;height:13px;background:#808080"></div>
<div class="a" style="left:489.9px;top:232px;width:1px;height:13px;background:#fff"></div>
<div class="t" style="left:491.9px;top:233.5px;width:86.80000000000007px;overflow:hidden">DateTimeClosed</div>
<div class="a" style="left:578.2px;top:232px;width:1px;height:13px;background:#808080"></div>
<div class="a" style="left:579.2px;top:232px;width:1px;height:13px;background:#fff"></div>
<div class="t" style="left:581.2px;top:233.5px;width:37.299999999999955px;overflow:hidden">Close</div>
<div class="a" style="left:618.0px;top:232px;width:1px;height:13px;background:#808080"></div>
<div class="a" style="left:619.0px;top:232px;width:1px;height:13px;background:#fff"></div>
<div class="t" style="left:621.0px;top:233.5px;width:64.60000000000002px;overflow:hidden">Terms</div>
<div class="a" style="left:685.1px;top:232px;width:1px;height:13px;background:#808080"></div>
<div class="a" style="left:686.1px;top:232px;width:1px;height:13px;background:#fff"></div>
<div class="t" style="left:688.1px;top:233.5px;width:56.10000000000002px;overflow:hidden">PONumber</div>
<div class="a" style="left:743.7px;top:232px;width:1px;height:13px;background:#808080"></div>
<div class="a" style="left:744.7px;top:232px;width:1px;height:13px;background:#fff"></div>
<div class="t" style="left:746.7px;top:233.5px;width:87.19999999999993px;overflow:hidden">DateTimeDue</div>
<div class="a" style="left:833.4px;top:232px;width:1px;height:13px;background:#808080"></div>
<div class="a" style="left:834.4px;top:232px;width:1px;height:13px;background:#fff"></div>
<div class="t" style="left:836.4px;top:233.5px;width:50.200000000000045px;overflow:hidden">Clo</div>
<div class="a" style="left:886.1px;top:232px;width:1px;height:13px;background:#808080"></div>
<div class="a" style="left:887.1px;top:232px;width:1px;height:13px;background:#fff"></div>
<div class="a" style="left:937.1px;top:232px;width:1px;height:13px;background:#808080"></div>
<div class="a" style="left:938.1px;top:232px;width:1px;height:13px;background:#fff"></div>
<div class="t" style="left:940.1px;top:233.5px;width:57.89999999999998px;overflow:hidden">&nbsp;&nbsp;on</div>
<div class="a" style="left:997.5px;top:232px;width:1px;height:13px;background:#808080"></div>
<div class="a" style="left:998.5px;top:232px;width:1px;height:13px;background:#fff"></div>
<div class="t" style="left:1000.5px;top:233.5px;width:10.5px;overflow:hidden"><span style="letter-spacing:-0.5px">Ser</span></div>
<svg class="a" style="left:138.5px;top:234px" width="6" height="8"><path d="M0 0.5H1M2 0.5H6M0 2.5H1M2 2.5H6M0 4.5H1M2 4.5H6M0 6.5H1M2 6.5H6" stroke="#222" stroke-width="1"/></svg>
<svg class="a" style="left:608px;top:235px" width="7" height="6"><path d="M0.5 5.5L3.5 0.5L6.5 5.5Z" fill="#e4e2dc" stroke="#fff" stroke-width="0.8"/><path d="M0.5 5.5L3.5 0.5" stroke="#909090" stroke-width="0.8"/></svg>
<div class="a" style="left:137px;top:246px;width:9px;height:15px;background:#d4d0c8;border-right:1px solid #808080"></div>
<svg class="a" style="left:138px;top:251px" width="7" height="7"><path d="M0.5 0.8H6.5L4 3.3V6H3V3.3Z" fill="#fff" stroke="#000" stroke-width="0.9"/></svg>
<div class="t" style="left:528.5px;top:249px;color:#808080">Click here to define a filter</div>
<div class="a" style="left:137px;top:261px;width:874px;height:4px;background:linear-gradient(#e8e6e2,#cfccc4)"></div>
<div class="a" style="left:137px;top:265px;width:9px;height:201.25px;background:#d4d0c8"></div>
<div class="gl" style="left:145.5px;top:265px;width:1px;height:201.25px"></div>
<div class="gl" style="left:260.2px;top:265px;width:1px;height:201.25px"></div>
<div class="gl" style="left:334.8px;top:265px;width:1px;height:201.25px"></div>
<div class="gl" style="left:418.9px;top:265px;width:1px;height:201.25px"></div>
<div class="gl" style="left:488.9px;top:265px;width:1px;height:201.25px"></div>
<div class="gl" style="left:578.2px;top:265px;width:1px;height:201.25px"></div>
<div class="gl" style="left:618.0px;top:265px;width:1px;height:201.25px"></div>
<div class="gl" style="left:685.1px;top:265px;width:1px;height:201.25px"></div>
<div class="gl" style="left:743.7px;top:265px;width:1px;height:201.25px"></div>
<div class="gl" style="left:833.4px;top:265px;width:1px;height:201.25px"></div>
<div class="gl" style="left:886.1px;top:265px;width:1px;height:201.25px"></div>
<div class="gl" style="left:937.1px;top:265px;width:1px;height:201.25px"></div>
<div class="gl" style="left:997.5px;top:265px;width:1px;height:201.25px"></div>
<div class="gl" style="left:137px;top:264.50px;width:874px;height:1px"></div>
<div class="gl" style="left:137px;top:278.88px;width:874px;height:1px"></div>
<div class="gl" style="left:137px;top:293.25px;width:874px;height:1px"></div>
<div class="gl" style="left:137px;top:307.62px;width:874px;height:1px"></div>
<div class="gl" style="left:137px;top:322.00px;width:874px;height:1px"></div>
<div class="gl" style="left:137px;top:336.38px;width:874px;height:1px"></div>
<div class="gl" style="left:137px;top:350.75px;width:874px;height:1px"></div>
<div class="gl" style="left:137px;top:365.12px;width:874px;height:1px"></div>
<div class="gl" style="left:137px;top:379.50px;width:874px;height:1px"></div>
<div class="gl" style="left:137px;top:393.88px;width:874px;height:1px"></div>
<div class="gl" style="left:137px;top:408.25px;width:874px;height:1px"></div>
<div class="gl" style="left:137px;top:422.62px;width:874px;height:1px"></div>
<div class="gl" style="left:137px;top:437.00px;width:874px;height:1px"></div>
<div class="gl" style="left:137px;top:451.38px;width:874px;height:1px"></div>
<div class="gl" style="left:137px;top:465.75px;width:874px;height:1px"></div>
<div class="t" style="left:148px;top:267.60px;color:#111;letter-spacing:-0.12px">Westin Homes</div>
<div class="t" style="left:260.7px;width:72.30000000000003px;text-align:right;top:267.60px">853</div>
<div class="t" style="left:337.1px;top:267.60px">Administrator</div>
<div class="t" style="left:421.4px;top:267.60px;letter-spacing:-0.1px">Sam Westin</div>
<div class="a" style="left:593.5px;top:267.50px;width:9px;height:9px;background:#fff;border-top:1px solid #707070;border-left:1px solid #707070;border-right:1px solid #e0ded8;border-bottom:1px solid #e0ded8"></div>
<div class="t" style="left:620.3px;top:267.60px">Net 30</div>
<div class="t" style="left:148px;top:281.98px;color:#111;letter-spacing:-0.12px">Westin Homes</div>
<div class="t" style="left:260.7px;width:72.30000000000003px;text-align:right;top:281.98px">1361</div>
<div class="t" style="left:337.1px;top:281.98px">Administrator</div>
<div class="t" style="left:421.4px;top:281.98px;letter-spacing:-0.1px">Sam Westin</div>
<div class="a" style="left:593.5px;top:281.88px;width:9px;height:9px;background:#fff;border-top:1px solid #707070;border-left:1px solid #707070;border-right:1px solid #e0ded8;border-bottom:1px solid #e0ded8"></div>
<div class="t" style="left:620.3px;top:281.98px">Net 30</div>
<div class="t" style="left:148px;top:296.35px;color:#111;letter-spacing:-0.12px">Westin Homes</div>
<div class="t" style="left:260.7px;width:72.30000000000003px;text-align:right;top:296.35px">1367</div>
<div class="t" style="left:337.1px;top:296.35px">Administrator</div>
<div class="t" style="left:421.4px;top:296.35px;letter-spacing:-0.1px">Jessica Taylor</div>
<div class="a" style="left:593.5px;top:296.25px;width:9px;height:9px;background:#fff;border-top:1px solid #707070;border-left:1px solid #707070;border-right:1px solid #e0ded8;border-bottom:1px solid #e0ded8"></div>
<div class="t" style="left:620.3px;top:296.35px">Net 30</div>
<div class="t" style="left:148px;top:310.73px;color:#111;letter-spacing:-0.12px">Westin Homes</div>
<div class="t" style="left:260.7px;width:72.30000000000003px;text-align:right;top:310.73px">1376</div>
<div class="t" style="left:337.1px;top:310.73px">Administrator</div>
<div class="t" style="left:421.4px;top:310.73px;letter-spacing:-0.1px">Jessica Taylor</div>
<div class="a" style="left:593.5px;top:310.62px;width:9px;height:9px;background:#fff;border-top:1px solid #707070;border-left:1px solid #707070;border-right:1px solid #e0ded8;border-bottom:1px solid #e0ded8"></div>
<div class="t" style="left:620.3px;top:310.73px">Net 30</div>
<div class="t" style="left:148px;top:325.10px;color:#111;letter-spacing:-0.12px">Westin Homes</div>
<div class="t" style="left:260.7px;width:72.30000000000003px;text-align:right;top:325.10px">1402</div>
<div class="t" style="left:337.1px;top:325.10px">Administrator</div>
<div class="t" style="left:421.4px;top:325.10px;letter-spacing:-0.1px">Jessica Taylor</div>
<div class="a" style="left:593.5px;top:325.00px;width:9px;height:9px;background:#fff;border-top:1px solid #707070;border-left:1px solid #707070;border-right:1px solid #e0ded8;border-bottom:1px solid #e0ded8"></div>
<div class="t" style="left:620.3px;top:325.10px">Net 30</div>
<div class="t" style="left:148px;top:339.48px;color:#111;letter-spacing:-0.12px">Westin Homes</div>
<div class="t" style="left:260.7px;width:72.30000000000003px;text-align:right;top:339.48px">1404</div>
<div class="t" style="left:337.1px;top:339.48px">Administrator</div>
<div class="t" style="left:421.4px;top:339.48px;letter-spacing:-0.1px">Jessica Taylor</div>
<div class="a" style="left:593.5px;top:339.38px;width:9px;height:9px;background:#fff;border-top:1px solid #707070;border-left:1px solid #707070;border-right:1px solid #e0ded8;border-bottom:1px solid #e0ded8"></div>
<div class="t" style="left:620.3px;top:339.48px">Net 30</div>
<div class="t" style="left:148px;top:353.85px;color:#111;letter-spacing:-0.12px">Westin Homes</div>
<div class="t" style="left:260.7px;width:72.30000000000003px;text-align:right;top:353.85px">1407</div>
<div class="t" style="left:337.1px;top:353.85px">Administrator</div>
<div class="t" style="left:421.4px;top:353.85px;letter-spacing:-0.1px">Jessica Taylor</div>
<div class="a" style="left:593.5px;top:353.75px;width:9px;height:9px;background:#fff;border-top:1px solid #707070;border-left:1px solid #707070;border-right:1px solid #e0ded8;border-bottom:1px solid #e0ded8"></div>
<div class="t" style="left:620.3px;top:353.85px">Net 30</div>
<div class="t" style="left:148px;top:368.23px;color:#111;letter-spacing:-0.12px">Westin Homes</div>
<div class="t" style="left:260.7px;width:72.30000000000003px;text-align:right;top:368.23px">1414</div>
<div class="t" style="left:337.1px;top:368.23px">Bob Fieldguy</div>
<div class="t" style="left:421.4px;top:368.23px;letter-spacing:-0.1px">Jessica Taylor</div>
<div class="a" style="left:593.5px;top:368.12px;width:9px;height:9px;background:#fff;border-top:1px solid #707070;border-left:1px solid #707070;border-right:1px solid #e0ded8;border-bottom:1px solid #e0ded8"></div>
<div class="t" style="left:620.3px;top:368.23px">Net 30</div>
<div class="a" style="left:146.5px;top:380.50px;width:113.7px;height:13.38px;background:#0a246a;outline:1px dotted #a89c6c;outline-offset:-1px"></div>
<svg class="a" style="left:140px;top:383.50px" width="4" height="8"><path d="M0 0L4 4L0 8Z" fill="#000"/></svg>
<div class="t" style="left:148px;top:382.60px;color:#fff;letter-spacing:-0.12px">Westin Homes</div>
<div class="t" style="left:260.7px;width:72.30000000000003px;text-align:right;top:382.60px">656</div>
<div class="t" style="left:337.1px;top:382.60px">Administrator</div>
<div class="t" style="left:421.4px;top:382.60px;letter-spacing:-0.1px">Sam Westin</div>
<div class="t" style="left:491.4px;top:382.60px;width:86.30000000000007px;overflow:hidden;font-size:8.75px">11/12/2010 1:27:55 PM</div>
<div class="a" style="left:593.5px;top:382.50px;width:9px;height:9px;background:#fff;border-top:1px solid #707070;border-left:1px solid #707070;border-right:1px solid #e0ded8;border-bottom:1px solid #e0ded8"></div>
<svg class="a" style="left:595.0px;top:384.50px" width="6" height="6"><path d="M0.5 2.5L2.3 4.5L5.5 0.8" stroke="#000" stroke-width="1.5" fill="none"/></svg>
<div class="t" style="left:746.4000000000001px;top:382.60px;font-size:8.75px">12/30/1899</div>
<div class="t" style="left:835.6999999999999px;top:382.60px;width:49.700000000000045px;overflow:hidden">Administrato</div>
<div class="t" style="left:148px;top:396.98px;color:#111;letter-spacing:-0.12px">Westin Homes</div>
<div class="t" style="left:260.7px;width:72.30000000000003px;text-align:right;top:396.98px">1224</div>
<div class="t" style="left:337.1px;top:396.98px">Administrator</div>
<div class="t" style="left:421.4px;top:396.98px;letter-spacing:-0.1px">Sam Westin</div>
<div class="t" style="left:491.4px;top:396.98px;width:86.30000000000007px;overflow:hidden;font-size:8.75px">12/14/2011 1:33:01 PM</div>
<div class="a" style="left:593.5px;top:396.88px;width:9px;height:9px;background:#fff;border-top:1px solid #707070;border-left:1px solid #707070;border-right:1px solid #e0ded8;border-bottom:1px solid #e0ded8"></div>
<svg class="a" style="left:595.0px;top:398.88px" width="6" height="6"><path d="M0.5 2.5L2.3 4.5L5.5 0.8" stroke="#000" stroke-width="1.5" fill="none"/></svg>
<div class="t" style="left:620.3px;top:396.98px">Net 30</div>
<div class="t" style="left:835.6999999999999px;top:396.98px;width:49.700000000000045px;overflow:hidden">Administrato</div>
<div class="t" style="left:148px;top:411.35px;color:#111;letter-spacing:-0.12px">Snap SIte 1</div>
<div class="t" style="left:260.7px;width:72.30000000000003px;text-align:right;top:411.35px">1325</div>
<div class="t" style="left:337.1px;top:411.35px">Administrator</div>
<div class="t" style="left:421.4px;top:411.35px;letter-spacing:-0.1px">Sam Westin</div>
<div class="t" style="left:491.4px;top:411.35px;width:86.30000000000007px;overflow:hidden;font-size:8.75px">2/7/2012 2:18:34 PM</div>
<div class="a" style="left:593.5px;top:411.25px;width:9px;height:9px;background:#fff;border-top:1px solid #707070;border-left:1px solid #707070;border-right:1px solid #e0ded8;border-bottom:1px solid #e0ded8"></div>
<svg class="a" style="left:595.0px;top:413.25px" width="6" height="6"><path d="M0.5 2.5L2.3 4.5L5.5 0.8" stroke="#000" stroke-width="1.5" fill="none"/></svg>
<div class="t" style="left:620.3px;top:411.35px">Net 30</div>
<div class="t" style="left:835.6999999999999px;top:411.35px;width:49.700000000000045px;overflow:hidden">Administrato</div>
<svg class="a" style="left:905px;top:410.75px" width="13.4" height="11" viewBox="0 0 13.4 11"><path d="M0.6 0.5H9.8L12.7 3.2V10.1H0.6Z" fill="#fff" stroke="#3a3a3a" stroke-width="0.8"/><text x="5.8" y="8" font-family="Liberation Sans,sans-serif" font-size="6.5" text-anchor="middle" fill="#909090">a</text></svg>
<div class="t" style="left:938.6px;top:411.35px;letter-spacing:-0.06px">Bob Fieldguy</div>
<div class="t" style="left:148px;top:425.73px;color:#111;letter-spacing:-0.12px">Westin Homes</div>
<div class="t" style="left:260.7px;width:72.30000000000003px;text-align:right;top:425.73px">1362</div>
<div class="t" style="left:337.1px;top:425.73px">Administrator</div>
<div class="t" style="left:421.4px;top:425.73px;letter-spacing:-0.1px">Sam Westin</div>
<div class="t" style="left:491.4px;top:425.73px;width:86.30000000000007px;overflow:hidden;font-size:8.75px">3/5/2012 12:46:18 PM</div>
<div class="a" style="left:593.5px;top:425.62px;width:9px;height:9px;background:#fff;border-top:1px solid #707070;border-left:1px solid #707070;border-right:1px solid #e0ded8;border-bottom:1px solid #e0ded8"></div>
<svg class="a" style="left:595.0px;top:427.62px" width="6" height="6"><path d="M0.5 2.5L2.3 4.5L5.5 0.8" stroke="#000" stroke-width="1.5" fill="none"/></svg>
<div class="t" style="left:620.3px;top:425.73px">Net 30</div>
<div class="t" style="left:746.4000000000001px;top:425.73px;font-size:8.75px">3/9/2012</div>
<div class="t" style="left:835.6999999999999px;top:425.73px;width:49.700000000000045px;overflow:hidden">Administrato</div>
<svg class="a" style="left:905px;top:425.12px" width="13.4" height="11" viewBox="0 0 13.4 11"><path d="M0.6 0.5H9.8L12.7 3.2V10.1H0.6Z" fill="#fff" stroke="#1a1a1a" stroke-width="0.9"/><path d="M0.6 10.5H12.7" stroke="#777" stroke-width="0.7"/><text x="6.5" y="8.9" font-family="Liberation Sans,sans-serif" font-size="9.6" text-anchor="middle" fill="#000" stroke="#000" stroke-width="0.35" textLength="8.4" lengthAdjust="spacingAndGlyphs">A</text></svg>
<div class="t" style="left:938.6px;top:425.73px;letter-spacing:-0.06px">Bob Fieldguy</div>
<div class="t" style="left:148px;top:440.10px;color:#111;letter-spacing:-0.12px">Westin Homes</div>
<div class="t" style="left:260.7px;width:72.30000000000003px;text-align:right;top:440.10px">1365</div>
<div class="t" style="left:337.1px;top:440.10px">Administrator</div>
<div class="t" style="left:421.4px;top:440.10px;letter-spacing:-0.1px">Jessica Taylor</div>
<div class="t" style="left:491.4px;top:440.10px;width:86.30000000000007px;overflow:hidden;font-size:8.75px">3/6/2012 12:26:04 PM</div>
<div class="a" style="left:593.5px;top:440.00px;width:9px;height:9px;background:#fff;border-top:1px solid #707070;border-left:1px solid #707070;border-right:1px solid #e0ded8;border-bottom:1px solid #e0ded8"></div>
<svg class="a" style="left:595.0px;top:442.00px" width="6" height="6"><path d="M0.5 2.5L2.3 4.5L5.5 0.8" stroke="#000" stroke-width="1.5" fill="none"/></svg>
<div class="t" style="left:620.3px;top:440.10px">Net 30</div>
<div class="t" style="left:687.4px;top:440.10px">123</div>
<div class="t" style="left:746.4000000000001px;top:440.10px;font-size:8.75px">3/9/2012</div>
<div class="t" style="left:835.6999999999999px;top:440.10px;width:49.700000000000045px;overflow:hidden">Administrato</div>
<svg class="a" style="left:905px;top:439.50px" width="13.4" height="11" viewBox="0 0 13.4 11"><path d="M0.6 0.5H9.8L12.7 3.2V10.1H0.6Z" fill="#fff" stroke="#1a1a1a" stroke-width="0.9"/><path d="M0.6 10.5H12.7" stroke="#777" stroke-width="0.7"/><text x="6.5" y="8.9" font-family="Liberation Sans,sans-serif" font-size="9.6" text-anchor="middle" fill="#000" stroke="#000" stroke-width="0.35" textLength="8.4" lengthAdjust="spacingAndGlyphs">A</text></svg>
<div class="t" style="left:938.6px;top:440.10px;letter-spacing:-0.06px">Bob Fieldguy</div>
<div class="t" style="left:148px;top:454.48px;color:#111;letter-spacing:-0.12px">Westin Homes</div>
<div class="t" style="left:260.7px;width:72.30000000000003px;text-align:right;top:454.48px">1396</div>
<div class="t" style="left:337.1px;top:454.48px">Administrator</div>
<div class="t" style="left:421.4px;top:454.48px;letter-spacing:-0.1px">Jessica Taylor</div>
<div class="t" style="left:491.4px;top:454.48px;width:86.30000000000007px;overflow:hidden;font-size:8.75px">4/3/2012 11:47:24 AM</div>
<div class="a" style="left:593.5px;top:454.38px;width:9px;height:9px;background:#fff;border-top:1px solid #707070;border-left:1px solid #707070;border-right:1px solid #e0ded8;border-bottom:1px solid #e0ded8"></div>
<svg class="a" style="left:595.0px;top:456.38px" width="6" height="6"><path d="M0.5 2.5L2.3 4.5L5.5 0.8" stroke="#000" stroke-width="1.5" fill="none"/></svg>
<div class="t" style="left:620.3px;top:454.48px">Net 30</div>
<div class="t" style="left:746.4000000000001px;top:454.48px;font-size:8.75px">4/6/2012</div>
<div class="t" style="left:835.6999999999999px;top:454.48px;width:49.700000000000045px;overflow:hidden">Administrato</div>
<svg class="a" style="left:905px;top:453.88px" width="13.4" height="11" viewBox="0 0 13.4 11"><path d="M0.6 0.5H9.8L12.7 3.2V10.1H0.6Z" fill="#fff" stroke="#1a1a1a" stroke-width="0.9"/><path d="M0.6 10.5H12.7" stroke="#777" stroke-width="0.7"/><text x="6.5" y="8.9" font-family="Liberation Sans,sans-serif" font-size="9.6" text-anchor="middle" fill="#000" stroke="#000" stroke-width="0.35" textLength="8.4" lengthAdjust="spacingAndGlyphs">A</text></svg>
<div class="t" style="left:938.6px;top:454.48px;letter-spacing:-0.06px">Bob Fieldguy</div>
<div class="t" style="left:938.6px;top:267.60px;letter-spacing:-0.06px">Bob Fieldguy</div>
<div class="t" style="left:938.6px;top:281.98px;letter-spacing:-0.06px">Bob Fieldguy</div>
<div class="t" style="left:938.6px;top:296.35px;letter-spacing:-0.06px">Bob Fieldguy</div>
<div class="t" style="left:938.6px;top:310.73px;letter-spacing:-0.06px">Bob Fieldguy</div>
<div class="t" style="left:938.6px;top:325.10px;letter-spacing:-0.06px">Bob Fieldguy</div>
<div class="t" style="left:938.6px;top:339.48px;letter-spacing:-0.06px">Bob Fieldguy</div>
<div class="t" style="left:938.6px;top:353.85px;letter-spacing:-0.06px">Bob Fieldguy</div>
<div class="t" style="left:938.6px;top:368.23px;letter-spacing:-0.06px">Bob Fieldguy</div>
<div class="t" style="left:938.6px;top:382.60px;letter-spacing:-0.06px">Bob Fieldguy</div>
<div class="t" style="left:938.6px;top:396.98px;letter-spacing:-0.06px">Bob Fieldguy</div>
<div class="a" style="left:137px;top:529.5px;width:874px;height:18px;background:#d4d0c8;border-top:1px solid #808080"></div>
<div class="a" style="left:145.5px;top:530.5px;width:1px;height:17px;background:#fff"></div>
<div class="a" style="left:137px;top:547.5px;width:874px;height:12.5px;background:#e9e7e2;background-image:repeating-conic-gradient(#f1f0ec 0 25%,#e2e0da 0 50%);background-size:2px 2px"></div>
<div class="a" style="left:137px;top:547.5px;width:12px;height:12.5px;background:#d4d0c8;border:1px solid #fff;border-right-color:#404040;border-bottom-color:#404040"></div>
<svg class="a" style="left:141px;top:550.5px" width="4" height="7"><path d="M4 0L0 3.5L4 7Z" fill="#000"/></svg>
<div class="a" style="left:149px;top:547.5px;width:137.5px;height:12.5px;background:#d4d0c8;border:1px solid #fff;border-right-color:#404040;border-bottom-color:#404040;box-shadow:inset -1px -1px 0 #808080"></div>
<div class="a" style="left:998.5px;top:547.5px;width:12.5px;height:12.5px;background:#d4d0c8;border:1px solid #fff;border-right-color:#404040;border-bottom-color:#404040"></div>
<svg class="a" style="left:1003.5px;top:550.5px" width="4" height="7"><path d="M0 0L4 3.5L0 7Z" fill="#000"/></svg>
<div class="a" style="left:135px;top:567px;width:877px;height:1.5px;background:#6d7fb3"></div>
<div class="a" style="left:135px;top:568.5px;width:877px;height:1px;background:#fff"></div>
<div class="a" style="left:141.5px;top:579px;width:9px;height:9px;border-radius:50%;background:#fff;border:1px solid #808080"></div>
<div class="t" style="left:154.0px;top:578.5px">Active Customers</div>
<div class="a" style="left:431.5px;top:579px;width:9px;height:9px;border-radius:50%;background:#fff;border:1px solid #808080"></div>
<div class="t" style="left:444.0px;top:578.5px">Inactive Customers</div>
<div class="a" style="left:721.5px;top:579px;width:9px;height:9px;border-radius:50%;background:#fff;border:1px solid #808080"></div>
<div class="a" style="left:724.5px;top:582px;width:3px;height:3px;border-radius:50%;background:#000"></div>
<div class="t" style="left:734.0px;top:578.5px">All Customers</div>
<div class="a" style="left:3px;top:598px;width:1018px;height:1px;background:#8e8c86"></div>
<div class="a" style="left:3px;top:600.2px;width:1018px;height:1px;background:#908e88"></div>
<div class="a" style="left:309.8px;top:599.5px;width:1.6px;height:3px;background:#fff"></div>
<div class="a" style="left:308.6px;top:600.2px;width:1px;height:2px;background:#d4d0c8"></div>
<div class="a" style="left:412.8px;top:599.5px;width:1.6px;height:3px;background:#fff"></div>
<div class="a" style="left:411.6px;top:600.2px;width:1px;height:2px;background:#d4d0c8"></div>
<div class="a" style="left:515.2px;top:599.5px;width:1.6px;height:3px;background:#fff"></div>
<div class="a" style="left:514.0px;top:600.2px;width:1px;height:2px;background:#d4d0c8"></div>
<div class="a" style="left:719.2px;top:599.5px;width:1.6px;height:3px;background:#fff"></div>
<div class="a" style="left:718.0px;top:600.2px;width:1px;height:2px;background:#d4d0c8"></div>
<div class="a" style="left:849px;top:177px;width:130.3px;height:229.3px;background:#d4d0c8;border:1px solid #f4f3f0;border-right-color:#5e5e5e;border-bottom-color:#5e5e5e;box-shadow:inset -1px -1px 0 #a8a6a0"></div>
<div class="t" style="left:864.3px;top:180.4px">Print Packet</div>
<div class="t" style="left:864.3px;top:194.2px">New Install Order</div>
<div class="t" style="left:864.3px;top:208.0px">New Service Order</div>
<div class="t" style="left:864.3px;top:221.8px">New Proposal</div>
<div class="t" style="left:864.3px;top:242.2px">New Itemized Invoice</div>
<div class="t" style="left:864.3px;top:256.0px">New Combined Invoice</div>
<div class="t" style="left:864.3px;top:269.8px">Print Mailing Label</div>
<div class="t" style="left:864.3px;top:290.2px">Copy to Sales</div>
<div class="t" style="left:864.3px;top:304.0px">Copy to Rolodex</div>
<div class="t" style="left:864.3px;top:317.8px">Jump to Sales</div>
<div class="t" style="left:864.3px;top:338.2px">Duplicate Customer</div>
<div class="t" style="left:864.3px;top:352.0px">Apply Customer Defaults</div>
<div class="t" style="left:864.3px;top:365.8px">Set To Inactive</div>
<div class="t" style="left:864.3px;top:379.4px">Recalculate Aging Tools</div>
<div class="t" style="left:864.3px;top:393.0px">Merge with...</div>
<div class="a" style="left:852.4px;top:236.5px;width:123px;height:1px;background:#8e8c86"></div>
<div class="a" style="left:852.4px;top:237.5px;width:123px;height:1px;background:#f8f8f6"></div>
<div class="a" style="left:852.4px;top:284.3px;width:123px;height:1px;background:#8e8c86"></div>
<div class="a" style="left:852.4px;top:285.3px;width:123px;height:1px;background:#f8f8f6"></div>
<div class="a" style="left:852.4px;top:332.7px;width:123px;height:1px;background:#8e8c86"></div>
<div class="a" style="left:852.4px;top:333.7px;width:123px;height:1px;background:#f8f8f6"></div>
<svg class="a" style="left:912.8px;top:162.6px" width="9.6" height="15.6" viewBox="0 0 12 19"><path d="M0.5 0.5V15L4 11.8L6.6 17.8L9 16.8L6.4 10.9H11Z" fill="#fff" stroke="#000" stroke-width="1"/></svg>
</body></html>
